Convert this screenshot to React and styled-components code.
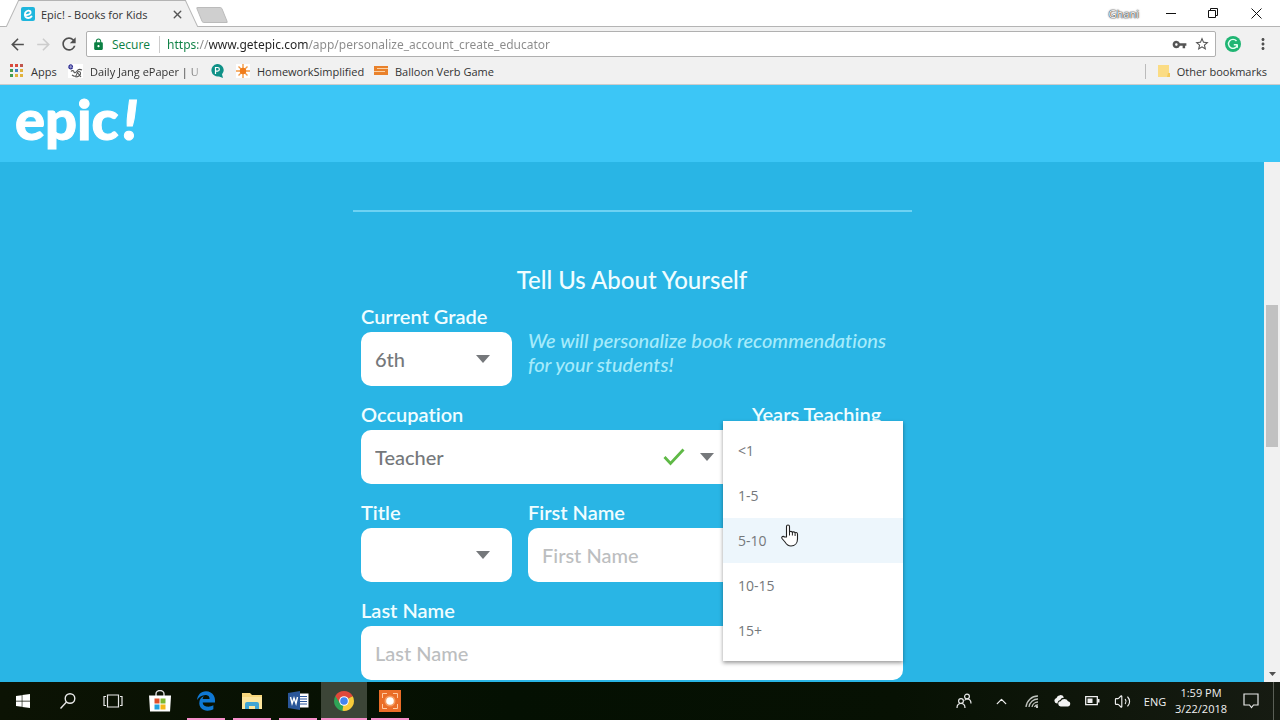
import React, { useState } from "react";
import styled, { createGlobalStyle, css } from "styled-components";
import {
  MdArrowBack,
  MdArrowForward,
  MdRefresh,
  MdLock,
  MdVpnKey,
  MdStarBorder,
  MdMoreVert,
} from "react-icons/md";
import { FaWindows, FaEdgeLegacy } from "react-icons/fa";
import { ChevronUp, Volume2, X } from "lucide-react";

const years = ["<1", "1-5", "5-10", "10-15", "15+"];

const App = () => {
  const [hovered, setHovered] = useState("5-10");
  return (
    <Desktop>
      <GlobalStyle />
      <TabStrip>
        <Tab>
          <EpicFavicon />
          <TabTitle>Epic! - Books for Kids</TabTitle>
          <TabClose aria-label="Close tab">
            <X size={13} strokeWidth={2.6} />
          </TabClose>
        </Tab>
        <NewTab aria-label="New tab" />
        <WindowControls>
          <Profile>Ghani</Profile>
          <WindowButton aria-label="Minimize">
            <svg width="10" height="10">
              <path d="M0 5.5h10" stroke="#111" />
            </svg>
          </WindowButton>
          <WindowButton aria-label="Restore">
            <svg width="11" height="11" fill="none" stroke="#111">
              <path d="M.5 2.5h7v7h-7zM2.500 2.500v-2h7v7h-2" />
            </svg>
          </WindowButton>
          <WindowButton aria-label="Close">
            <svg width="11" height="11" stroke="#111">
              <path d="M.5.5l10 10M10.500.5l-10 10" />
            </svg>
          </WindowButton>
        </WindowControls>
      </TabStrip>

      <Toolbar>
        <NavButton aria-label="Back">
          <MdArrowBack size={19} />
        </NavButton>
        <NavButton aria-label="Forward" $dim>
          <MdArrowForward size={19} />
        </NavButton>
        <NavButton aria-label="Reload">
          <MdRefresh size={20} />
        </NavButton>
        <Omnibox>
          <MdLock size={13} color="#0b8043" />
          <Secure>Secure</Secure>
          <UrlInput
            aria-label="Address"
            defaultValue="https://www.getepic.com/app/personalize_account_create_educator"
          />
          <MdVpnKey size={15} color="#555" />
          <MdStarBorder size={16} color="#555" />
        </Omnibox>
        <ExtensionButton aria-label="Grammarly">
          <svg width="16" height="16" fill="none">
            <circle cx="8" cy="8" r="8" fill="#1fb573" />
            <path
              d="M11.500 5A4.500 4.500 0 1 0 12.300 9.200M12.500 8.700H8.800M12.300 8.500v3.300"
              stroke="#e6fff3"
              strokeWidth="1.400"
            />
          </svg>
        </ExtensionButton>
        <NavButton aria-label="Menu">
          <MdMoreVert size={18} />
        </NavButton>
      </Toolbar>

      <Bookmarks>
        <Bookmark href="#apps" $width={58}>
          <AppsIcon />
          Apps
        </Bookmark>
        <Bookmark href="#jang" $width={142} $fade>
          <JangIcon />
          <span>Daily Jang ePaper | U</span>
        </Bookmark>
        <Bookmark href="#p" aria-label="Pearltrees" $width={26}>
          <svg width="14" height="14">
            <path d="M7 0a6.500 6.200 0 0 1 5 10.300l1 3.700-4-1.600A6.500 6.200 0 1 1 7 0z" fill="#0f9187" />
            <path d="M5.500 10V3.500h2a1.800 1.800 0 0 1 0 3.700h-2" fill="none" stroke="#fff" strokeWidth="1.200" />
          </svg>
        </Bookmark>
        <Bookmark href="#homework" $width={138}>
          <svg width="14" height="14" stroke="#f39a45" strokeWidth="1.400">
            <rect width="14" height="14" fill="#fff" stroke="none" />
            <path d="M7 0v14M0 7h14M2.500 2.500l9 9M11.500 2.500l-9 9" />
            <circle cx="7" cy="7" r="3.200" fill="#f07c1b" stroke="none" />
          </svg>
          HomeworkSimplified
        </Bookmark>
        <Bookmark href="#balloon" $width={120}>
          <svg width="14" height="14">
            <path d="M0 2h14v9H0z" fill="#e9812b" />
            <path d="M3 4.500h11M0 7.500h11" stroke="#fbd2a5" />
          </svg>
          Balloon Verb Game
        </Bookmark>
        <OtherBookmarks href="#other">
          <svg width="12" height="14">
            <path d="M0 1h11v12H0z" fill="#fbdc84" />
            <path d="M10 9h2v4h-3z" fill="#f4c95b" />
          </svg>
          Other bookmarks
        </OtherBookmarks>
      </Bookmarks>

      <SiteHeader>
        <Logo href="#home">
          epic<em>!</em>
        </Logo>
      </SiteHeader>

      <Viewport>
        <Page>
          <Divider />
          <Form>
            <Title>Tell Us About Yourself</Title>
            <Row $columns="151px 1fr">
              <SelectField id="grade" label="Current Grade" options={["6th"]} />
              <Hint>We will personalize book recommendations for your students!</Hint>
            </Row>
            <Row $columns="1fr 151px">
              <SelectField id="occupation" label="Occupation" options={["Teacher"]} checked />
              <Field>
                <Label htmlFor="years">Years Teaching</Label>
                <Control>
                  <Select id="years" />
                </Control>
                <Menu role="listbox" aria-label="Years Teaching">
                  {years.map((year) => (
                    <MenuItem
                      key={year}
                      role="option"
                      aria-selected={year === hovered}
                      $active={year === hovered}
                      onMouseEnter={() => setHovered(year)}
                    >
                      {year}
                    </MenuItem>
                  ))}
                  <HandCursor />
                </Menu>
              </Field>
            </Row>
            <Row $columns="151px 1fr">
              <SelectField id="title" label="Title" options={[""]} />
              <Field>
                <Label htmlFor="first">First Name</Label>
                <Input id="first" placeholder="First Name" />
              </Field>
            </Row>
            <Row $columns="1fr">
              <Field>
                <Label htmlFor="last">Last Name</Label>
                <Input id="last" placeholder="Last Name" />
              </Field>
            </Row>
          </Form>
        </Page>
        <Scrollbar>
          <Thumb />
          <svg width="16" height="16">
            <path d="M5 6h7l-3.500 4z" fill="#505050" />
          </svg>
        </Scrollbar>
      </Viewport>

      <Taskbar>
        <SystemButtons>
          <TaskButton aria-label="Start">
            <FaWindows size={16} color="#fff" />
          </TaskButton>
          <TaskButton aria-label="Search">
            <svg width="18" height="18" fill="none" stroke="#e8e8e8" strokeWidth="1.400">
              <circle cx="11" cy="6.500" r="4.800" />
              <path d="M7.500 10L1.500 16.500" />
            </svg>
          </TaskButton>
          <TaskButton aria-label="Task View">
            <svg width="20" height="14" fill="none" stroke="#e8e8e8" strokeWidth="1.200">
              <path d="M4.500 1h11v12h-11zM3 2.500H1v9h2M17 2.500h2v9h-2" />
            </svg>
          </TaskButton>
        </SystemButtons>
        <TaskApp aria-label="Store">
          <svg width="22" height="22">
            <path d="M7 6V4a4 3.500 0 0 1 8 0v2" fill="none" stroke="#ddd" strokeWidth="1.400" />
            <path d="M0 5.500h22l-1 16H1z" fill="#fff" />
            <path d="M5.500 8.500H10.500v5H5.500z" fill="#e04f2b" />
            <path d="M11.500 8.500h5v5h-5z" fill="#7db72f" />
            <path d="M5.500 14.500h5v5h-5z" fill="#22a2e0" />
            <path d="M11.500 14.500h5v5h-5z" fill="#f4b71b" />
          </svg>
        </TaskApp>
        <TaskApp aria-label="Edge" $open>
          <FaEdgeLegacy size={20} color="#0f78d4" />
        </TaskApp>
        <TaskApp aria-label="File Explorer" $open>
          <svg width="20" height="18">
            <path d="M0 1h8l2 2h10v14H0z" fill="#f7d77c" />
            <path d="M0 5h20v12H0z" fill="#fce59d" />
            <path d="M3 17v-5q0-2 2-2h10q2 0 2 2v5h-4v-3H7v3z" fill="#3fa4d4" />
          </svg>
        </TaskApp>
        <TaskApp aria-label="Word" $open>
          <svg width="21" height="20">
            <path d="M11 2.500h9.500v14H11z" fill="#fff" />
            <path d="M12 5.500h7M12 8h7M12 10.500h7M12 13h7" stroke="#2b579a" />
            <path d="M0 2l12-2v19L0 17z" fill="#2a5699" />
            <path d="M2.500 6l1.600 6.500L6 7l2 5.500L9.500 6" fill="none" stroke="#fff" strokeWidth="1.400" />
          </svg>
        </TaskApp>
        <TaskApp aria-label="Chrome" $open $active>
          <ChromeIcon />
        </TaskApp>
        <TaskApp aria-label="Screen recorder" $open>
          <svg width="22" height="22">
            <path d="M0 0h22v22H0z" fill="#ea6d28" />
            <path
              d="M3.500 8V3.500H8M14 3.500h4.500V8M18.500 14v4.500H14M8 18.500H3.500V14"
              fill="none"
              stroke="#ffc9a0"
            />
            <circle cx="11" cy="11" r="5.500" fill="#f59a5f" />
            <circle cx="11" cy="11" r="3.800" fill="#fff" />
          </svg>
        </TaskApp>

        <Tray>
          <TrayButton aria-label="People" $width={42}>
            <svg width="16" height="16" fill="none" stroke="#e8e8e8" strokeWidth="1.200">
              <circle cx="5" cy="8" r="2.400" />
              <path d="M1 15c0-3 1.500-4.500 4-4.500S9 12 9 15" />
              <circle cx="11" cy="3.500" r="2.400" />
              <path d="M8.500 7.500c.8-1 1.500-1.500 2.500-1.500 2.500 0 4 1.500 4 4.500" />
            </svg>
          </TrayButton>
          <TrayButton aria-label="Show hidden icons" $width={32}>
            <ChevronUp size={17} strokeWidth={1.8} />
          </TrayButton>
          <TrayButton aria-label="Network" $width={30}>
            <svg width="14" height="14" fill="none" stroke="#bfc3bd" strokeWidth="1.300">
              <path d="M1 13A12 12 0 0 1 13 2M4 13a9 9 0 0 1 9-8M7 13a6 6 0 0 1 6-5M9.500 13A3.500 3.500 0 0 1 13 11" />
              <circle cx="12" cy="13" r="1" fill="#fff" stroke="none" />
            </svg>
          </TrayButton>
          <TrayButton aria-label="OneDrive" $width={30}>
            <svg width="17" height="12" fill="#f2f2f2">
              <path d="M3.500 8.500H3A2.800 2.800 0 0 1 2.500 3 4 4 0 0 1 10 2.500Q7 2.800 6 5.200 3.700 5.500 3.500 8.500z" />
              <path d="M7 11.500a2.600 2.600 0 0 1-.3-5.200A4 4 0 0 1 14 6.200a2.700 2.700 0 0 1 .2 5.300z" />
            </svg>
          </TrayButton>
          <TrayButton aria-label="Battery" $width={30}>
            <svg width="15" height="10">
              <path d="M.7.7h11.600v8H.7z" fill="none" stroke="#eee" strokeWidth="1.300" />
              <path d="M2.500 2.500h5v4.500h-5z" fill="#eee" />
              <path d="M13 3h1.500v3.500H13z" fill="#eee" />
            </svg>
          </TrayButton>
          <TrayButton aria-label="Volume" $width={30}>
            <Volume2 size={17} strokeWidth={1.6} />
          </TrayButton>
          <TrayButton $width={36}>ENG</TrayButton>
          <Clock>
            <span>1:59 PM</span>
            <span>3/22/2018</span>
          </Clock>
          <TrayButton aria-label="Notifications" $width={44}>
            <svg width="16" height="16" fill="none" stroke="#e8e8e8" strokeWidth="1.200">
              <path d="M1 1h14v11h-4.500L8.500 14.500 6.500 12H1z" />
            </svg>
          </TrayButton>
          <ShowDesktop aria-label="Show desktop" />
        </Tray>
      </Taskbar>
    </Desktop>
  );
};

const SelectField = ({ id, label, options, checked }) => (
  <Field>
    <Label htmlFor={id}>{label}</Label>
    <Control>
      <Select id={id}>
        {options.map((option) => (
          <option key={option}>{option}</option>
        ))}
      </Select>
      <Adornments>
        {checked && (
          <svg width="22" height="18">
            <path d="M1.500 9l6 6.500L20.500 1.500" fill="none" stroke="#5fb946" strokeWidth="2.800" />
          </svg>
        )}
        <svg width="14" height="8">
          <path d="M0 0h14L7 8z" fill="#75787b" />
        </svg>
      </Adornments>
    </Control>
  </Field>
);

const EpicFavicon = () => (
  <svg width="14" height="14" fill="none">
    <rect width="14" height="14" rx="2" fill="#1fb6dd" />
    <path
      d="M4 8.200C8 8.200 10 6.800 9.600 5 9.200 3 5.500 3 4.200 6 3 9 5 11 7.200 11c1.500 0 2.600-.7 3.300-1.600"
      stroke="#fff"
      strokeWidth="1.900"
      strokeLinecap="round"
    />
  </svg>
);

const appColors = [
  "#d94a3d", "#d94a3d", "#c0554d",
  "#3f9b54", "#3f7fc4", "#e0b23c",
  "#3f9b54", "#e0b23c", "#e0b23c",
];

const AppsIcon = () => (
  <svg width="14" height="14">
    {appColors.map((color, i) => (
      <rect key={i} x={(i % 3) * 5} y={Math.floor(i / 3) * 5} width="3" height="3" fill={color} />
    ))}
  </svg>
);

const JangIcon = () => (
  <svg width="15" height="14" fill="none">
    <rect width="15" height="14" fill="#fff" />
    <path d="M1 3h3.500C4.500 0 .8.500.8 3.200 1 5.500 3.500 5 4.500 4" stroke="#2a2a90" strokeWidth="1.200" />
    <path
      d="M3 7.500c1-1.500 3-1 3 .5s2 .5 3-1 3-2 5-1M4 11c3 2.500 4.500 1 5-1.500s3-2.500 3.500-.5-2 4-5 4M9 8l4 5"
      stroke="#555"
      strokeWidth="1.100"
    />
  </svg>
);

const ChromeIcon = () => (
  <svg width="20" height="20" viewBox="0 0 20 20">
    <path d="M10 10L1.340 5A10 10 0 0 1 18.660 5z" fill="#e0483a" />
    <path d="M10 10L18.660 5A10 10 0 0 1 10 20z" fill="#f8cb3a" />
    <path d="M10 10V20A10 10 0 0 1 1.340 5z" fill="#2fa356" />
    <path d="M10 5.400h8.900L18.660 5H10zM6 12.300L1.340 5l1.500 0L10 10z" fill="#e0483a" />
    <path d="M14 12.300L10 20 8.500 19.500 10 10z" fill="#f8cb3a" />
    <circle cx="10" cy="10" r="4.800" fill="#fff" />
    <circle cx="10" cy="10" r="3.800" fill="#4284f0" />
  </svg>
);

const HandCursor = () => (
  <Cursor width="18" height="23" viewBox="0 0 18 23">
    <path
      d="M5.500 13V2.500c0-2 3-2 3 0V8.500c0-1.500 2.700-1.500 2.900.3 0-1.400 2.500-1.300 2.700.5.1-1.200 2.400-1 2.400.8V15c0 4-2.500 7-6.500 7-3 0-4.500-1.500-6-4L1 14.500c-.8-1.800 1.200-2.800 2.500-1.500z"
      fill="#fff"
      stroke="#222"
      strokeWidth="1.100"
      strokeLinejoin="round"
    />
    <path d="M8.500 8.500v3M11.400 9v2.500M14.100 9.500V12" stroke="#222" fill="none" />
  </Cursor>
);

const GlobalStyle = createGlobalStyle`
  * {
    box-sizing: border-box;
  }
  body {
    margin: 0;
    font-family: "Open Sans", "Noto Sans", sans-serif;
    font-size: 11px;
    color: #333;
  }
  button {
    border: 0;
    padding: 0;
    background: none;
    color: inherit;
    font: inherit;
  }
  a {
    color: inherit;
    text-decoration: none;
  }
  svg {
    flex-shrink: 0;
  }
`;

const Desktop = styled.div`
  display: flex;
  flex-direction: column;
  height: 100vh;
  overflow: hidden;
`;

const TabStrip = styled.div`
  display: flex;
  height: 27px;
  padding: 0 2px 0 12px;
  background: #fff;
  border-bottom: 1px solid #b4b4b4;
`;

const Tab = styled.div`
  position: relative;
  z-index: 0;
  display: flex;
  align-items: center;
  gap: 6px;
  width: 180px;
  height: 27px;
  padding: 1px 8px 0 9px;
  &::before,
  &::after {
    content: "";
    position: absolute;
    z-index: -1;
    top: 0;
    bottom: 0;
    background: #f1f1f1;
    border-top: 1px solid #b4b4b4;
  }
  &::before {
    left: 0;
    width: 50%;
    border-left: 1px solid #b4b4b4;
    transform: skewX(-25deg);
  }
  &::after {
    right: 0;
    width: 60%;
    border-right: 1px solid #b4b4b4;
    transform: skewX(25deg);
  }
`;

const TabTitle = styled.span`
  flex: 1;
  white-space: nowrap;
`;

const TabClose = styled.button`
  display: flex;
  color: #555;
`;

const NewTab = styled.button`
  align-self: flex-end;
  width: 26px;
  height: 16px;
  margin: 0 0 3px 7px;
  border: 1px solid #bbb;
  border-radius: 2px;
  background: #cfcfcf;
  transform: skewX(22deg);
`;

const WindowControls = styled.div`
  display: flex;
  align-items: center;
  margin-left: auto;
`;

const Profile = styled.span`
  margin-right: 10px;
  color: #fff;
  text-shadow: 0 0 2px #333, 0 0 1px #333, 0 0 1px #333;
`;

const WindowButton = styled.button`
  display: flex;
  align-items: center;
  justify-content: center;
  width: 43px;
  height: 26px;
`;

const Toolbar = styled.div`
  display: flex;
  align-items: center;
  height: 34px;
  padding: 0 4px;
  background: #f1f1f1;
`;

const NavButton = styled.button`
  display: flex;
  align-items: center;
  justify-content: center;
  width: 26px;
  height: 26px;
  color: ${(props) => (props.$dim ? "#ccc" : "#505050")};
`;

const ExtensionButton = styled(NavButton)`
  margin-right: 4px;
`;

const Omnibox = styled.div`
  display: flex;
  flex: 1;
  align-items: center;
  gap: 7px;
  height: 26px;
  margin: 0 4px;
  padding: 0 5px;
  border: 1px solid #b0b0b0;
  border-radius: 2px;
  background: #fff;
  font-size: 12px;
`;

const Secure = styled.span`
  padding-right: 9px;
  border-right: 1px solid #ccc;
  color: #0b8043;
`;

const UrlInput = styled.input`
  flex: 1;
  min-width: 0;
  padding: 0;
  border: 0;
  outline: 0;
  font-family: "Noto Sans", sans-serif;
  font-size: 12px;
  color: transparent;
  background: linear-gradient(
    90deg,
    #0b8043 0 31px,
    #8a8a8a 31px 42px,
    #222 42px 142px,
    #8a8a8a 142px
  );
  background-clip: text;
`;

const Bookmarks = styled.nav`
  display: flex;
  align-items: center;
  height: 24px;
  padding: 0 13px 3px 10px;
  background: #f1f1f1;
  border-bottom: 1px solid #ccc;
`;

const Bookmark = styled.a`
  display: flex;
  align-items: center;
  gap: 7px;
  width: ${(props) => props.$width}px;
  white-space: nowrap;
  ${(props) =>
    props.$fade &&
    css`
      span {
        mask-image: linear-gradient(90deg, #000 94px, transparent 116px);
      }
    `}
`;

const OtherBookmarks = styled(Bookmark)`
  width: auto;
  margin-left: auto;
  padding-left: 12px;
  border-left: 1px solid #bbb;
`;

const SiteHeader = styled.header`
  display: flex;
  height: 77px;
  padding-left: 15px;
  background: #3cc6f6;
`;

const Logo = styled.a`
  color: #fff;
  font-family: Lato, sans-serif;
  font-size: 56px;
  font-weight: 900;
  line-height: 68px;
  -webkit-text-stroke: 1px #fff;
  em {
    margin-left: 4px;
  }
`;

const Viewport = styled.div`
  display: flex;
  flex: 1;
  min-height: 0;
`;

const Page = styled.main`
  display: flex;
  flex: 1;
  flex-direction: column;
  align-items: center;
  overflow: hidden;
  padding-top: 48px;
  background: #29b5e5;
  color: #f0fdff;
  font-family: Lato, sans-serif;
  font-variant-ligatures: none;
`;

const Divider = styled.hr`
  width: 100%;
  max-width: 559px;
  margin: 0;
  border: 0;
  border-top: 2px solid #6dd2f3;
`;

const Form = styled.form`
  display: flex;
  flex-direction: column;
  gap: 16px;
  width: 100%;
  max-width: 542px;
`;

const Title = styled.h2`
  margin: 52px 0 -8px;
  font-size: 24px;
  font-weight: 500;
  line-height: 32px;
  text-align: center;
`;

const Row = styled.div`
  display: grid;
  grid-template-columns: ${(props) => props.$columns};
  column-gap: 16px;
`;

const Field = styled.div`
  position: relative;
  display: flex;
  flex-direction: column;
  gap: 4px;
  min-width: 0;
`;

const Label = styled.label`
  font-size: 20px;
  font-weight: 600;
  line-height: 24px;
  white-space: nowrap;
`;

const Control = styled.div`
  position: relative;
  display: grid;
`;

const boxStyles = css`
  width: 100%;
  height: 54px;
  padding: 0 14px;
  border: 0;
  border-radius: 10px;
  background: #fff;
  color: #75787b;
  font-family: inherit;
  font-size: 20px;
  font-weight: 500;
`;

const Select = styled.select`
  ${boxStyles}
  appearance: none;
`;

const Input = styled.input`
  ${boxStyles}
  &::placeholder {
    color: #bcbec0;
  }
`;

const Adornments = styled.div`
  position: absolute;
  right: 22px;
  top: 0;
  bottom: 0;
  display: flex;
  align-items: center;
  gap: 15px;
  pointer-events: none;
`;

const Hint = styled.p`
  margin: 0;
  padding-top: 24px;
  color: #a6ebfb;
  font-size: 20px;
  font-style: italic;
  font-weight: 500;
  line-height: 24px;
`;

const Menu = styled.div`
  position: absolute;
  z-index: 2;
  top: 19px;
  right: 0;
  display: flex;
  flex-direction: column;
  width: 180px;
  padding: 7px 0 8px;
  background: #fff;
  box-shadow: 0 2px 4px rgba(0, 0, 0, 0.4);
`;

const MenuItem = styled.button`
  height: 45px;
  padding: 0 15px;
  background: ${(props) => (props.$active ? "#edf6fc" : "none")};
  color: #75787b;
  font-family: "Open Sans", "Noto Sans", sans-serif;
  font-size: 14px;
  text-align: left;
`;

const Cursor = styled.svg`
  position: absolute;
  left: 58px;
  top: 103px;
  pointer-events: none;
`;

const Scrollbar = styled.div`
  display: flex;
  flex-direction: column;
  justify-content: flex-end;
  width: 16px;
  padding-top: 143px;
  background: #f1f1f1;
`;

const Thumb = styled.div`
  height: 142px;
  margin: 0 2px auto;
  background: #c1c1c1;
`;

const Taskbar = styled.footer`
  display: flex;
  height: 38px;
  background: linear-gradient(90deg, #0c1304, #041002 40%, #071103 70%, #161b12);
  color: #f0f0f0;
  font-size: 11px;
`;

const SystemButtons = styled.div`
  display: flex;
  margin-right: 2px;
`;

const TaskButton = styled.button`
  display: flex;
  align-items: center;
  justify-content: center;
  width: 45px;
`;

const TaskApp = styled(TaskButton)`
  width: 46px;
  background: ${(props) => (props.$active ? "#3c4537" : "none")};
  ${(props) =>
    props.$open &&
    css`
      position: relative;
      &::after {
        content: "";
        position: absolute;
        left: ${props.$active ? 0 : 4}px;
        right: ${props.$active ? 0 : 4}px;
        bottom: 0;
        height: 2px;
        background: #f78fcb;
      }
    `}
`;

const Tray = styled.div`
  display: flex;
  margin-left: auto;
`;

const TrayButton = styled.button`
  display: flex;
  align-items: center;
  justify-content: center;
  width: ${(props) => props.$width}px;
`;

const Clock = styled.button`
  display: flex;
  flex-direction: column;
  align-items: center;
  justify-content: center;
  width: 56px;
  line-height: 16px;
`;

const ShowDesktop = styled.button`
  width: 7px;
  border-left: 1px solid #5a5f56;
`;

export default App;
